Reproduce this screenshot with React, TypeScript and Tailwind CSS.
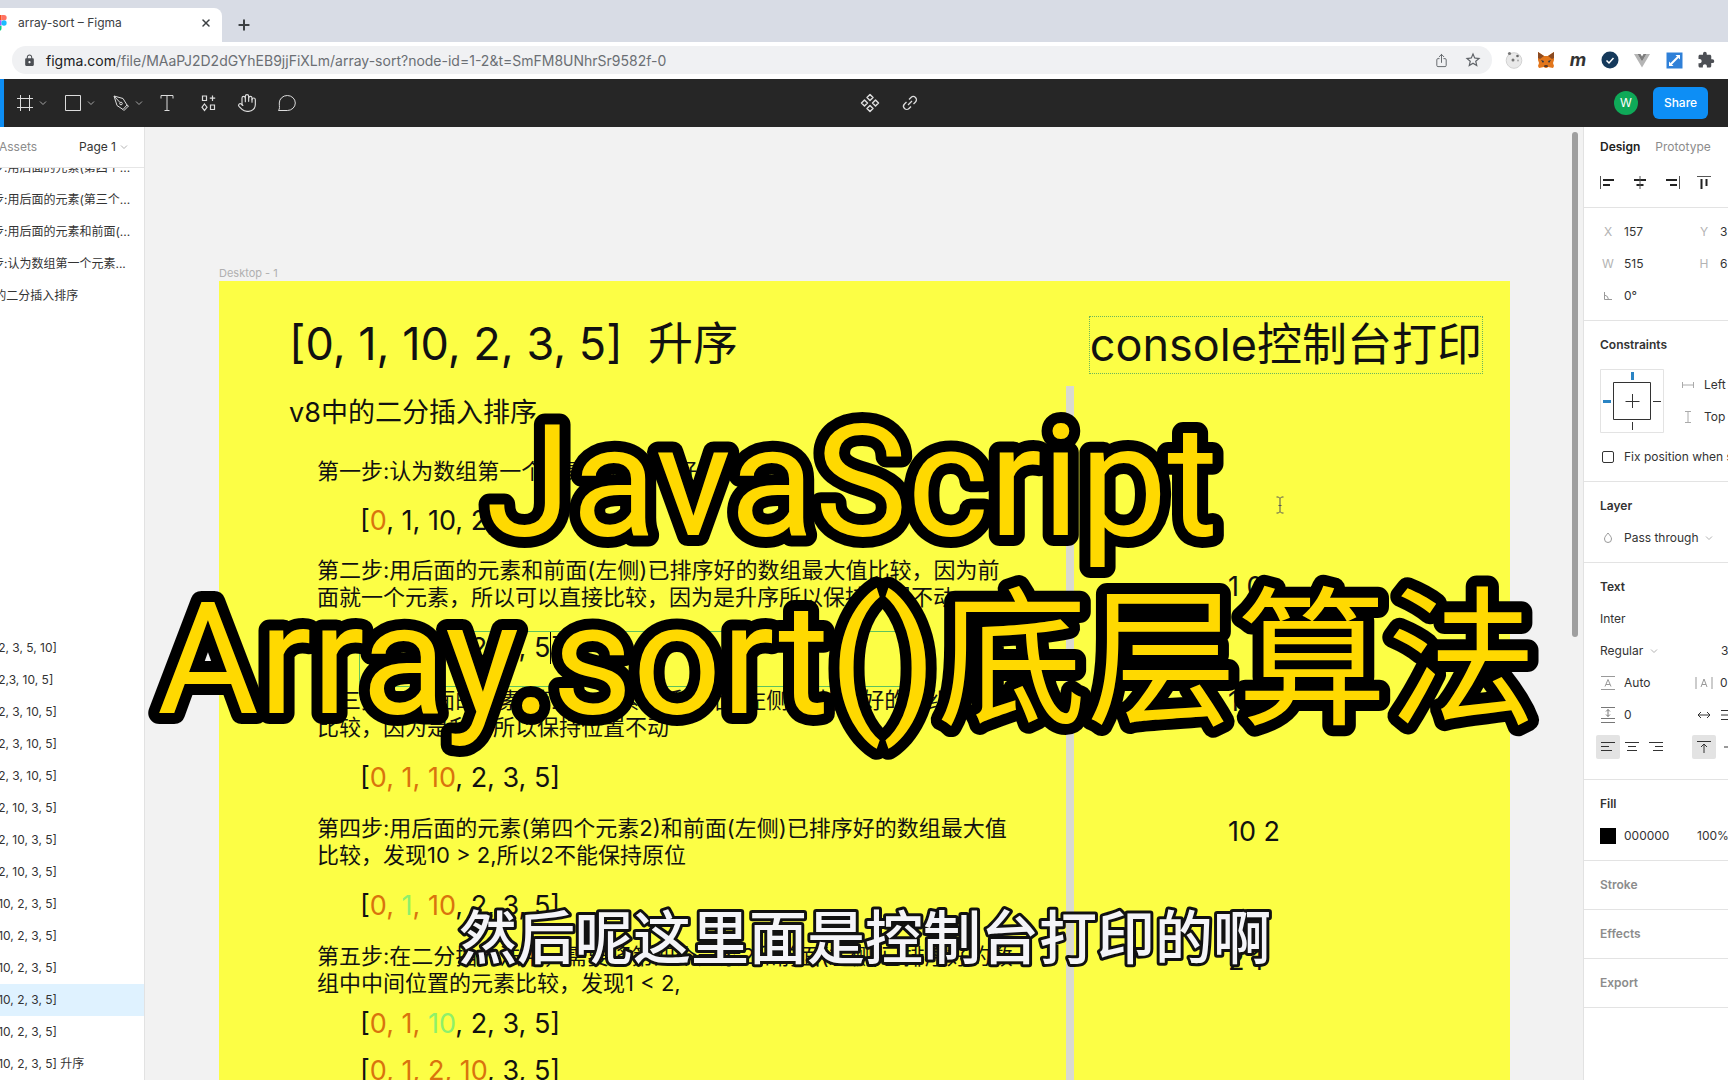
import { ReactNode } from "react";
import { Hand, Plus, X } from "lucide-react";
import { IoShareOutline } from "react-icons/io5";
import { MdExtension, MdLock, MdStarBorder } from "react-icons/md";

const stepLayers = [
  "第四步:用后面的元素(第四个...",
  "第三步:用后面的元素(第三个...",
  "第二步:用后面的元素和前面(...",
  "第一步:认为数组第一个元素...",
  "v8中的二分插入排序",
];

const arrayLayers = [
  "[0, 1, 2, 3, 5, 10]",
  "[0, 1, 2,3, 10, 5]",
  "[0, 1, 2, 3, 10, 5]",
  "[0, 1, 2, 3, 10, 5]",
  "[0, 1, 2, 3, 10, 5]",
  "[0, 1, 2, 10, 3, 5]",
  "[0, 1, 2, 10, 3, 5]",
  "[0, 1, 2, 10, 3, 5]",
  "[0, 1, 10, 2, 3, 5]",
  "[0, 1, 10, 2, 3, 5]",
  "[0, 1, 10, 2, 3, 5]",
  "[0, 1, 10, 2, 3, 5]",
  "[0, 1, 10, 2, 3, 5]",
  "[0, 1, 10, 2, 3, 5] 升序",
];

const SELECTED_LAYER = 11;

const Chevron = ({ className = "text-[#b3b3b3]" }: { className?: string }) => (
  <svg width="8" height="8" viewBox="0 0 8 8" fill="none" stroke="currentColor" className={className}>
    <path d="M1 2.5 4 5.5 7 2.5" />
  </svg>
);

/* ---------- browser chrome ---------- */

const FigmaLogo = () => (
  <svg width="11" height="16" viewBox="0 0 11 16">
    <path d="M3 0h2.500v5.300H3A2.650 2.650 0 0 1 3 0Z" fill="#f24e1e" />
    <path d="M5.500 0H8a2.650 2.650 0 0 1 0 5.300H5.500Z" fill="#ff7262" />
    <path d="M3 5.300h2.500v5.300H3a2.650 2.650 0 0 1 0-5.300Z" fill="#a259ff" />
    <circle cx="8" cy="8" r="2.650" fill="#1abcfe" />
    <path d="M3 10.700h2.500v2.600A2.650 2.650 0 1 1 3 10.700Z" fill="#0acf83" />
  </svg>
);

const extensions: { name: string; icon: ReactNode }[] = [
  {
    name: "Panda",
    icon: (
      <svg width="18" height="18" viewBox="0 0 18 18">
        <circle cx="9" cy="9.500" r="7.800" fill="#e9e9e9" stroke="#d2d2d2" />
        <circle cx="4.500" cy="2.500" r="1.600" fill="#777" />
        <circle cx="12.500" cy="5" r="1.300" fill="#666" />
        <circle cx="8" cy="9" r="1.500" fill="#777" />
        <circle cx="13" cy="9.500" r="1" fill="#aaa" />
      </svg>
    ),
  },
  {
    name: "MetaMask",
    icon: (
      <svg width="18" height="18" viewBox="0 0 18 18">
        <path d="M1 1l6 4h4l6-4v8l-1 3 1 3-1 2-5-1-1 1H8l-1-1-5 1-1-2 1-3-1-3Z" fill="#e2761b" />
        <path d="M1 1l6 4-4 3-2-1ZM17 1l-6 4 4 3 2-1Z" fill="#8a4a22" />
        <path d="M4 9l3 1-1 2ZM14 9l-3 1 1 2Z" fill="#233447" />
        <path d="M7.500 14h3l.5 2H7Z" fill="#5b3a26" />
      </svg>
    ),
  },
  {
    name: "Mimic",
    icon: <span className="text-[18px] leading-4 font-bold italic text-[#333]">m</span>,
  },
  {
    name: "Checker",
    icon: (
      <svg width="18" height="18" viewBox="0 0 18 18" fill="none">
        <circle cx="9" cy="9" r="8.500" fill="#15395b" />
        <path d="m5.500 9.500 2.500 2.500 4.500-5" stroke="#fff" strokeWidth="1.500" />
      </svg>
    ),
  },
  {
    name: "Vue",
    icon: (
      <svg width="16" height="15" viewBox="0 0 16 15">
        <path d="M0 1h3.500L8 8.500 12.500 1H16L8 14.500Z" fill="#b5b5b5" />
        <path d="M3.500 1H6.500L8 3.500 9.500 1h3L8 8.500Z" fill="#7d7d7d" />
      </svg>
    ),
  },
  {
    name: "Resize",
    icon: (
      <svg width="17" height="17" viewBox="0 0 17 17" fill="none">
        <path d="M.5.5h16v16H.5Z" fill="#2f80d8" />
        <path d="m5 12 7-7" stroke="#fff" strokeWidth="2" />
        <path d="M9.500 3H14v4.500ZM3 9.500V14h4.500Z" fill="#fff" />
      </svg>
    ),
  },
  { name: "Extensions", icon: <MdExtension size={18} className="text-[#4c4f54]" /> },
];

const BrowserBar = () => (
  <header className="shrink-0 bg-[#d8dce5]">
    <div className="flex h-[42px] items-end">
      <div className="flex h-[34px] w-[222px] items-center rounded-tr-lg bg-white pr-[10px] pb-1 text-[#3c4043]">
        <span className="-ml-1">
          <FigmaLogo />
        </span>
        <span className="ml-[11px] flex-1 text-[12px]">array-sort – Figma</span>
        <button aria-label="Close tab">
          <X size={12} strokeWidth={3} />
        </button>
      </div>
      <button aria-label="New tab" className="flex h-[34px] w-[44px] items-center justify-center text-[#3c4043]">
        <Plus size={16} strokeWidth={3} />
      </button>
    </div>
    <div className="flex h-[37px] items-center bg-white pb-px pl-3">
      <div className="flex h-7 flex-1 items-center rounded-full bg-[#f0f1f3] pl-[11px] pr-[3px]">
        <MdLock size={13} className="text-[#4c4f54]" />
        <a href="#file" className="ml-[10px] flex-1 text-[14px] text-[#6b6f74]">
          <span className="text-[#202124]">figma.com</span>
          /file/MAaPJ2D2dGYhEB9jjFiXLm/array-sort?node-id=1-2&amp;t=SmFM8UNhrSr9582f-0
        </a>
        <button aria-label="Share page" className="flex w-8 justify-center text-[#5f6368]">
          <IoShareOutline size={15} />
        </button>
        <button aria-label="Bookmark" className="flex w-8 justify-center text-[#5f6368]">
          <MdStarBorder size={18} />
        </button>
      </div>
      <div className="ml-[6px] flex pr-[6px]">
        {extensions.map(({ name, icon }) => (
          <button key={name} aria-label={name} className="flex h-7 w-8 items-center justify-center">
            {icon}
          </button>
        ))}
      </div>
    </div>
  </header>
);

/* ---------- figma toolbar ---------- */

const ToolIcon = ({ size = 16, children }: { size?: number; children: ReactNode }) => (
  <svg width={size} height={size} viewBox={`0 0 ${size} ${size}`} fill="none" stroke="currentColor">
    {children}
  </svg>
);

const menuTools = [
  { name: "Frame", icon: <path d="M3.500 0v16M12.500 0v16M0 3.500h16M0 12.500h16" /> },
  { name: "Rectangle", icon: <path d="M.5.5h15v15H.5Z" /> },
  {
    name: "Pen",
    icon: (
      <>
        <path d="M1 1l9 2.500 4 6.500-4 4.500L4 10.500Z" />
        <path d="m1 1 6 6.500M10 14.500l1 1 4.500-4.500-1.500-1" />
        <circle cx="8" cy="8.500" r="1.300" />
      </>
    ),
  },
];

const singleTools = [
  {
    name: "Text",
    icon: (
      <ToolIcon size={20}>
        <path d="M4 5.500v-3h12v3M10 2.500v15M7.500 17.500h5" />
      </ToolIcon>
    ),
  },
  {
    name: "Resources",
    icon: (
      <ToolIcon size={20}>
        <path
          d="M5.500 3h4v4.500h-4ZM15.500 2.500v5.500M12.800 5.200h5.400M13.500 12h4v4.500h-4ZM7.500 11l2.500 3.200L7.500 17.500 5 14.200Z"
          strokeWidth="1.200"
        />
      </ToolIcon>
    ),
  },
  { name: "Hand", icon: <Hand size={20} strokeWidth={1.4} /> },
  {
    name: "Comment",
    icon: (
      <ToolIcon size={20}>
        <path d="M1.500 17.500c1.500-2 .8-3.500.8-7.500a8 7.500 0 1 1 8 7.500Z" />
      </ToolIcon>
    ),
  },
];

const Toolbar = () => (
  <nav className="flex h-12 shrink-0 items-center bg-[#262626] text-[#dcdcdc]">
    <div className="flex flex-1 items-center">
      <span className="h-12 w-1 bg-[#0d8ef5]" />
      <div className="ml-[6px] flex">
        {menuTools.map(({ name, icon }) => (
          <button key={name} aria-label={name} className="flex w-12 items-center gap-[6px] pl-[7px]">
            <ToolIcon>{icon}</ToolIcon>
            <Chevron className="text-[#a5a5a5]" />
          </button>
        ))}
      </div>
      <div className="ml-[3px] flex gap-5">
        {singleTools.map(({ name, icon }) => (
          <button key={name} aria-label={name}>
            {icon}
          </button>
        ))}
      </div>
    </div>
    <div className="flex gap-5 pl-[72px]">
      <button aria-label="Create component">
        <ToolIcon size={20}>
          <path
            d="m10 1.500 3 3-3 3-3-3ZM10 12.500l3 3-3 3-3-3ZM4.500 7l3 3-3 3-3-3ZM15.500 7l3 3-3 3-3-3Z"
            strokeWidth="1.500"
            strokeLinejoin="round"
          />
        </ToolIcon>
      </button>
      <button aria-label="Create link">
        <ToolIcon size={20}>
          <path
            d="M8 12l4-4M9 6.500 11 4.500a3 3 0 0 1 4.500 4.500L13.500 11M6.500 9 4.500 11a3 3 0 0 0 4.500 4.500L11 13.500"
            strokeWidth="1.300"
          />
        </ToolIcon>
      </button>
    </div>
    <div className="flex flex-1 items-center justify-end gap-[15px] pr-5">
      <span className="flex size-6 items-center justify-center rounded-full bg-[#0fa958] text-[12px] text-white">W</span>
      <button className="h-8 w-[55px] rounded-md bg-[#0d8ef5] text-[12px] font-medium text-white">Share</button>
    </div>
  </nav>
);

/* ---------- layers ---------- */

const LayerRow = ({ label, selected }: { label?: string; selected?: boolean }) => (
  <li className={`h-8 overflow-hidden whitespace-nowrap leading-8 ${selected ? "bg-[#dff2ff]" : ""}`}>
    <span className="-ml-8">{label}</span>
  </li>
);

const LayersPanel = () => (
  <aside className="flex w-[145px] shrink-0 flex-col border-r border-[#e2e2e2] bg-white text-[12px] text-[#333]">
    <div className="flex h-[41px] shrink-0 items-center justify-between border-b border-[#e6e6e6] pr-4">
      <button className="-ml-px text-[#8c8c8c]">Assets</button>
      <button className="flex items-center gap-1">
        Page 1 <Chevron />
      </button>
    </div>
    <div className="flex min-h-0 flex-1 flex-col justify-end overflow-hidden">
      <ul>
        {stepLayers.map((label) => (
          <LayerRow key={label} label={label} />
        ))}
      </ul>
      <ul className="pt-80">
        {arrayLayers.map((label, i) => (
          <LayerRow key={i} label={label} selected={i === SELECTED_LAYER} />
        ))}
      </ul>
    </div>
  </aside>
);

/* ---------- canvas ---------- */

const Sorted = ({ children }: { children: ReactNode }) => <span className="text-[#d9730d]">{children}</span>;
const Middle = ({ children }: { children: ReactNode }) => <span className="text-[#8ef06a]">{children}</span>;

const Step = ({ children }: { children: ReactNode }) => (
  <p className="pl-[98px] text-[22px] leading-[27px]">{children}</p>
);

const ArrayLine = ({ children }: { children: ReactNode }) => (
  <p className="pl-[141px] text-[27px] leading-8">{children}</p>
);

const DesktopFrame = () => (
  <section className="flex min-h-0 flex-1 flex-col overflow-hidden whitespace-nowrap bg-[#fcfe45] text-[#111]">
    <div className="flex shrink-0 items-start justify-between pl-[70px] pr-[27px] pt-[35px] text-[45px] leading-[56px]">
      <h1 className="whitespace-pre">[0, 1, 10, 2, 3, 5]  升序</h1>
      <p className="border border-dotted border-[#6cb65a]">console控制台打印</p>
    </div>
    <div className="mt-3 flex min-h-0 flex-1">
      <div className="min-w-0 flex-1">
        <h2 className="pl-[70px] pt-[11px] text-[27px] leading-8">v8中的二分插入排序</h2>
        <div className="mt-[29px] space-y-5">
          <Step>第一步:认为数组第一个元素是已排序好的</Step>
          <ArrayLine>
            [<Sorted>0</Sorted>, 1, 10, 2, 3, 5]
          </ArrayLine>
          <Step>
            第二步:用后面的元素和前面(左侧)已排序好的数组最大值比较，因为前
            <br />
            面就一个元素，所以可以直接比较，因为是升序所以保持位置不动
          </Step>
        </div>
        <div className="ml-[140px] mt-5 h-14 w-[572px] border border-[#5fc25e]">
          <p className="flex text-[27px] leading-8">
            <span>
              [<Sorted>0, 1</Sorted>, 10, 2, 3, 5
            </span>
            <span className="border-l border-black">]</span>
          </p>
        </div>
        <div className="space-y-[21px]">
          <Step>
            第三步:用后面的元素(第三个元素10)和前面(左侧)已排序好的数组最大值
            <br />
            比较，因为是升序所以保持位置不动
          </Step>
          <ArrayLine>
            [<Sorted>0, 1, 10</Sorted>, 2, 3, 5]
          </ArrayLine>
          <Step>
            第四步:用后面的元素(第四个元素2)和前面(左侧)已排序好的数组最大值
            <br />
            比较，发现10 &gt; 2,所以2不能保持原位
          </Step>
          <ArrayLine>
            [<Sorted>0, </Sorted>
            <Middle>1</Middle>
            <Sorted>, 10</Sorted>, 2, 3, 5]
          </ArrayLine>
          <Step>
            第五步:在二分插入法中，需要将第四个元素2和前面(左侧)已排序好的数
            <br />
            组中中间位置的元素比较，发现1 &lt; 2,
          </Step>
        </div>
        <div className="mt-[11px] space-y-[15px]">
          <ArrayLine>
            [<Sorted>0, 1, </Sorted>
            <Middle>10</Middle>, 2, 3, 5]
          </ArrayLine>
          <ArrayLine>
            [<Sorted>0, 1, 2, 10</Sorted>, 3, 5]
          </ArrayLine>
        </div>
      </div>
      <div className="w-2 bg-[#d9d9d0]" />
      <div className="w-[436px] pl-[154px] text-[27px] leading-8">
        <svg width="10" height="18" viewBox="0 0 10 18" fill="none" stroke="#555" className="ml-[47px] mt-[110px]">
          <path d="M1.500 1h2L5 2.500 6.500 1h2M5 2.500v13M1.500 17h2L5 15.500 6.500 17h2M3.500 9.500h3" />
        </svg>
        <p className="mt-[57px]">1 0</p>
        <p className="mt-[83px]">10 1</p>
        <p className="mt-[98px]">10 2</p>
        <p className="mt-[97px]">2 1</p>
      </div>
    </div>
  </section>
);

const Canvas = () => (
  <main className="flex min-w-0 flex-1 bg-[#f2f2f2]">
    <div className="flex min-w-0 flex-1 flex-col pl-[74px] pt-[138px]">
      <span className="text-[11px] leading-4 text-[#b0b0b0]">Desktop - 1</span>
      <DesktopFrame />
    </div>
    <div className="w-[74px] pl-[62px] pt-[5px]">
      <div className="h-[505px] w-[6px] rounded-full bg-[#9f9f9f]" />
    </div>
  </main>
);

/* ---------- design panel ---------- */

const Row = ({ children }: { children: ReactNode }) => <div className="flex h-8 items-center">{children}</div>;

const Section = ({ title, children }: { title: string; children?: ReactNode }) => (
  <section className="border-b border-[#e3e3e3] px-4 py-2">
    <h3 className={`leading-8 font-semibold ${children ? "text-[#333]" : "text-[#8c8c8c]"}`}>{title}</h3>
    {children}
  </section>
);

const Field = ({ label, name, value }: { label: ReactNode; name: string; value: string }) => (
  <label className="flex w-24 items-center gap-2">
    <span className="flex w-4 shrink-0 justify-center text-[#b3b3b3]">{label}</span>
    <input aria-label={name} defaultValue={value} className="w-14 bg-transparent outline-none" />
  </label>
);

const Dropdown = ({ name, value, chevron }: { name: string; value: string; chevron?: boolean }) => (
  <span className="flex items-center gap-[6px]">
    <select aria-label={name} className="appearance-none bg-transparent outline-none">
      <option>{value}</option>
    </select>
    {chevron && <Chevron />}
  </span>
);

const alignIcons = [
  { name: "Align left", bars: "M3 5h11M3 10h7", line: "M.5 1v13" },
  { name: "Align center", bars: "M2 5h12M4.500 10h7", line: "M8 1v13" },
  { name: "Align right", bars: "M2 5h11M6 10h7", line: "M15.500 1v13" },
  { name: "Align top", bars: "M5.500 4v10M10.500 4v7", line: "M1 1.500h14" },
];

const DesignPanel = () => (
  <aside className="w-36 shrink-0 overflow-hidden bg-white text-[12px] text-[#333] shadow-[-1px_0_0_#e2e2e2]">
    <div className="w-60">
      <div className="flex h-10 items-center gap-[15px] px-4 text-[#8c8c8c]">
        <button className="font-semibold text-[#222]">Design</button>
        <button>Prototype</button>
      </div>
      <div className="flex h-[41px] gap-4 border-b border-[#e3e3e3] px-4 pt-2">
        {alignIcons.map(({ name, bars, line }) => (
          <button key={name} aria-label={name} className="h-4">
            <svg width="16" height="16" viewBox="0 0 16 16" fill="none" stroke="#222">
              <path d={bars} strokeWidth="2" />
              <path d={line} stroke="#555" />
            </svg>
          </button>
        ))}
      </div>
      <div className="border-b border-[#e3e3e3] px-4 py-2">
        <Row>
          <Field label="X" name="X" value="157" />
          <Field label="Y" name="Y" value="3" />
        </Row>
        <Row>
          <Field label="W" name="Width" value="515" />
          <Field label="H" name="Height" value="6" />
        </Row>
        <Row>
          <Field
            name="Rotation"
            value="0°"
            label={
              <svg width="8" height="8" viewBox="0 0 8 8" fill="none" stroke="#999">
                <path d="M.5 0v7.500H8M.5 3a5 5 0 0 1 4 4.500" />
              </svg>
            }
          />
        </Row>
      </div>
      <Section title="Constraints">
        <div className="flex gap-4 pt-2">
          <svg width="64" height="64" viewBox="0 0 64 64" fill="none" stroke="#333">
            <path d="M.5.5h63v63H.5Z" stroke="#e3e3e3" />
            <path d="M13.500 13.500h37v37h-37Z" />
            <path d="M32.500 25v14M25.500 32.500h14M53 32.500h8M32.500 53v8" />
            <path d="M32.500 3v8M3 32.500h8" stroke="#2a84c4" strokeWidth="3" />
          </svg>
          <div className="flex-1">
            <Row>
              <svg width="16" height="10" viewBox="0 0 16 10" fill="none" stroke="#aaa" className="mr-2">
                <path d="M2.500 2v6M13.500 2v6M2.500 5h11" />
              </svg>
              <Dropdown name="Horizontal constraint" value="Left" />
            </Row>
            <Row>
              <svg width="16" height="12" viewBox="0 0 16 12" fill="none" stroke="#aaa" className="mr-2">
                <path d="M5 .5h6M5 11.500h6M8 .5v11" />
              </svg>
              <Dropdown name="Vertical constraint" value="Top" />
            </Row>
          </div>
        </div>
        <label className="mt-2 flex h-8 items-center whitespace-nowrap">
          <input type="checkbox" className="ml-[2px] mr-[10px] size-3 appearance-none rounded-xs border border-[#333]" />
          Fix position when scrolling
        </label>
      </Section>
      <Section title="Layer">
        <Row>
          <svg width="16" height="12" viewBox="0 0 16 12" fill="none" stroke="#999" className="mr-2">
            <path d="M8 1c2 2.500 3.500 4 3.500 6a3.500 3.500 0 0 1-7 0C4.500 5 6 3.500 8 1Z" />
          </svg>
          <Dropdown name="Blend mode" value="Pass through" chevron />
        </Row>
      </Section>
      <Section title="Text">
        <Row>Inter</Row>
        <Row>
          <span className="w-[121px]">
            <Dropdown name="Font weight" value="Regular" chevron />
          </span>
          <input aria-label="Font size" defaultValue="3" className="w-10 bg-transparent" />
        </Row>
        <Row>
          <Field
            name="Line height"
            value="Auto"
            label={
              <svg width="14" height="16" viewBox="0 0 14 16" fill="none" stroke="#999">
                <path d="M0 1.500h14M0 14.500h14" />
                <path d="M4 11.500l3-7 3 7M5 9.500h4" />
              </svg>
            }
          />
          <Field
            name="Letter spacing"
            value="0"
            label={
              <svg width="18" height="12" viewBox="0 0 18 12" fill="none" stroke="#999" className="shrink-0">
                <path d="M1 0v12M17 0v12M6 10l3-8 3 8M7 7.500h4" />
              </svg>
            }
          />
        </Row>
        <Row>
          <Field
            name="Paragraph spacing"
            value="0"
            label={
              <svg width="14" height="18" viewBox="0 0 14 18" fill="none" stroke="#777">
                <path d="M0 1.500h14M0 12.500h14M0 16.500h14M7 3.500v7M5 5.500l2-2 2 2M5 8.500l2 2 2-2" />
              </svg>
            }
          />
          <button aria-label="Auto width" className="ml-[1px]">
            <svg width="14" height="10" viewBox="0 0 14 10" fill="none" stroke="#333">
              <path d="M1 5h12M4 2 1 5l3 3M10 2l3 3-3 3" />
            </svg>
          </button>
          <button aria-label="Auto height" className="ml-[10px]">
            <svg width="14" height="10" viewBox="0 0 14 10" fill="none" stroke="#333">
              <path d="M0 .5h14M0 5h14M0 9.500h14" />
            </svg>
          </button>
        </Row>
        <div className="-ml-1 mb-2 flex h-8 items-center text-[#333]">
          <button aria-label="Text align left" className="flex size-6 items-center justify-center rounded-xs bg-[#e3e3e3]">
            <ToolIcon>
              <path d="M1 3.500h14M1 7.500h8M1 11.500h11" />
            </ToolIcon>
          </button>
          <button aria-label="Text align center" className="flex size-6 items-center justify-center">
            <ToolIcon>
              <path d="M1 3.500h14M4 7.500h8M3 11.500h10" />
            </ToolIcon>
          </button>
          <button aria-label="Text align right" className="flex size-6 items-center justify-center">
            <ToolIcon>
              <path d="M1 3.500h14M7 7.500h8M5 11.500h10" />
            </ToolIcon>
          </button>
          <button aria-label="Align text top" className="ml-6 flex size-6 items-center justify-center rounded-xs bg-[#e3e3e3]">
            <ToolIcon>
              <path d="M1 2.500h14M8 14V5M5 8l3-3 3 3" />
            </ToolIcon>
          </button>
          <button aria-label="Align text middle" className="ml-1 flex size-6 items-center justify-center">
            <ToolIcon>
              <path d="M0 8h16M8 0v6M5.500 4 8 6.500 10.500 4M8 16v-6M5.500 12 8 9.500l2.500 2.500" />
            </ToolIcon>
          </button>
        </div>
      </Section>
      <Section title="Fill">
        <Row>
          <button aria-label="Fill color" className="size-4 bg-black" />
          <input aria-label="Fill hex" defaultValue="000000" className="ml-2 w-[73px] bg-transparent" />
          <input aria-label="Fill opacity" defaultValue="100%" className="w-12 bg-transparent" />
        </Row>
      </Section>
      <Section title="Stroke" />
      <Section title="Effects" />
      <Section title="Export" />
    </div>
  </aside>
);

/* ---------- video captions ---------- */

// svg text, because only there can an outline have round joins
const Captions = () => (
  <svg
    viewBox="0 0 1728 1080"
    textAnchor="middle"
    strokeLinejoin="round"
    className="pointer-events-none absolute inset-0 size-full [paint-order:stroke]"
  >
    <g
      fill="#ffd900"
      stroke="#000"
      strokeWidth="22"
      className="font-['Roboto','Noto_Sans_CJK_SC',sans-serif] text-[156px]"
    >
      <text x="852" y="535">
        JavaScript
      </text>
      <text x="847" y="713">
        Array.sort()<tspan className="text-[150px]">底层算法</tspan>
      </text>
    </g>
    <text x="865" y="959" fill="#f4f4f8" stroke="#111" strokeWidth="6" className="text-[58px] font-medium">
      然后呢这里面是控制台打印的啊
    </text>
  </svg>
);

const App = () => {
  return (
    <div className="relative flex h-screen flex-col overflow-hidden font-['Inter','Noto_Sans_CJK_SC',sans-serif]">
      <BrowserBar />
      <Toolbar />
      <div className="flex min-h-0 flex-1">
        <LayersPanel />
        <Canvas />
        <DesignPanel />
      </div>
      <Captions />
    </div>
  );
};

export default App;
